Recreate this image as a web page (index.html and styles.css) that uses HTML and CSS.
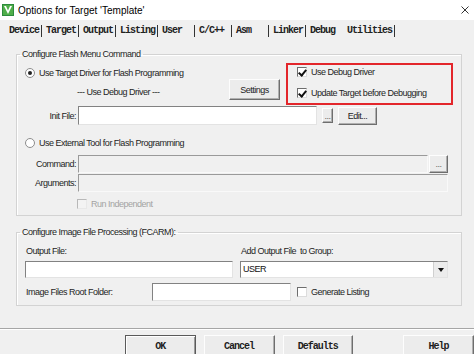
FILE: index.html
```html
<!DOCTYPE html>
<html lang="en">
<head>
    <meta charset="UTF-8" />
    <title>Options for Target 'Template'</title>
    <link rel="stylesheet" href="styles.css">
</head>

<body>
    <header class="titlebar">
        <svg class="app-icon" viewBox="0 0 12 12">
            <rect x="0" y="0" width="12" height="12" fill="#2d8b3c" />
            <rect x="1" y="1" width="10" height="10" fill="#4fae4a" />
            <path d="M2 2 L6 10 L10 2 L8 2 L6 6.5 L4 2 Z" fill="#ffffff" />
        </svg>
        <span class="title">Options for Target 'Template'</span>
        <svg class="close" viewBox="0 0 8 8">
            <path d="M0.5 0.5 L7.5 7.5 M7.5 0.5 L0.5 7.5" stroke="#333" stroke-width="1" />
        </svg>
    </header>

    <nav class="tabs">
        <span class="tab">Device</span>
        <span class="tab">Target</span>
        <span class="tab">Output</span>
        <span class="tab">Listing</span>
        <span class="tab">User</span>
        <span class="tab">C/C++</span>
        <span class="tab">Asm</span>
        <span class="tab">Linker</span>
        <span class="tab no-sep">Debug</span>
        <span class="tab active">Utilities</span>
    </nav>

    <div class="content">
        <fieldset class="group flash">
            <legend>Configure Flash Menu Command</legend>
            <div class="flash-top">
                <div class="flash-left">
                    <div class="opt first"><span class="radio on"></span>Use Target Driver for Flash Programming</div>
                    <div class="driver-row">
                        <span class="driver-note">--- Use Debug Driver ---</span>
                        <button class="btn settings">Settings</button>
                    </div>
                </div>
                <div class="highlight">
                    <div class="opt"><span class="check on"></span>Use Debug Driver</div>
                    <div class="opt"><span class="check on"></span>Update Target before Debugging</div>
                </div>
            </div>

            <div class="field-row init-row">
                <label class="lbl">Init File:</label>
                <span class="input init-input"></span>
                <button class="btn dots small">...</button>
                <button class="btn edit">Edit...</button>
            </div>

            <div class="opt ext-row"><span class="radio"></span>Use External Tool for Flash Programming</div>

            <div class="field-row cmd-row">
                <label class="lbl">Command:</label>
                <span class="input disabled grow"></span>
                <button class="btn dots">...</button>
            </div>
            <div class="field-row args-row">
                <label class="lbl">Arguments:</label>
                <span class="input disabled grow"></span>
            </div>
            <div class="opt run-row off"><span class="check"></span>Run Independent</div>
        </fieldset>

        <fieldset class="group image">
            <legend>Configure Image File Processing (FCARM):</legend>
            <div class="image-grid">
                <div class="col">
                    <span class="cap">Output File:</span>
                    <span class="input out-input"></span>
                </div>
                <div class="col">
                    <span class="cap">Add Output File&nbsp; to Group:</span>
                    <span class="input combo">USER<span class="drop"></span></span>
                </div>
            </div>
            <div class="root-row">
                <span class="root-lbl">Image Files Root Folder:</span>
                <span class="input root-input"></span>
                <div class="opt"><span class="check"></span>Generate Listing</div>
            </div>
        </fieldset>
    </div>

    <footer class="footer">
        <button class="btn big default">OK</button>
        <button class="btn big">Cancel</button>
        <button class="btn big">Defaults</button>
        <button class="btn big help">Help</button>
    </footer>
</body>

</html>
```

FILE: styles.css
```css
* {
    margin: 0;
    padding: 0;
    box-sizing: border-box;
}

body {
    width: 474px;
    height: 354px;
    overflow: hidden;
    background-color: #f0f0f0;
    color: #1e1e1e;
    font-family: "Liberation Sans", Arial, sans-serif;
    font-size: 9px;
    letter-spacing: -0.5px;
}

/* title bar */
.titlebar {
    height: 20px;
    background-color: #ffffff;
    display: flex;
    align-items: center;
    padding: 0 5px 0 2px;
}

.app-icon {
    width: 12px;
    height: 12px;
    margin-right: 4px;
}

.title {
    flex: 1;
    color: #000;
    font-size: 10px;
    letter-spacing: 0;
}

.close {
    width: 8px;
    height: 8px;
}

/* tab strip */
.tabs {
    height: 22px;
    display: flex;
    align-items: center;
    padding-left: 5px;
    font-family: "Liberation Mono", monospace;
    font-weight: bold;
    font-size: 10px;
    letter-spacing: -1px;
    color: #222;
}

.tab {
    min-width: 37px;
    height: 12px;
    line-height: 12px;
    padding: 0 2px 0 4px;
    border-right: 1px solid #333;
}

.tab.no-sep {
    border-right: none;
}

.content {
    padding: 6px 12px 0 16px;
}

/* group boxes */
.group {
    border: 1px solid #d3d3d3;
    box-shadow: inset 1px 1px #fff;
    padding: 3px 8px 4px 8px;
}

.group legend {
    margin-left: -5px;
    padding: 0 2px;
    line-height: 12px;
}

.opt {
    display: flex;
    align-items: center;
    gap: 4px;
    line-height: 12px;
    white-space: nowrap;
}

.radio {
    flex-shrink: 0;
    width: 10px;
    height: 10px;
    border-radius: 50%;
    border: 1px solid #8d8d8d;
    background-color: #fff;
    display: flex;
    align-items: center;
    justify-content: center;
}

.radio.on::after {
    content: "";
    width: 4px;
    height: 4px;
    border-radius: 50%;
    background-color: #222;
}

.check {
    flex-shrink: 0;
    position: relative;
    width: 10px;
    height: 10px;
    border: 1px solid;
    border-color: #6d6d6d #dcdcdc #dcdcdc #6d6d6d;
    background-color: #fff;
}

.check.on::after {
    content: "";
    position: absolute;
    left: 2px;
    top: 0px;
    width: 3px;
    height: 6px;
    border: solid #111;
    border-width: 0 2px 2px 0;
    transform: rotate(40deg);
}

/* flash section */
.flash-top {
    display: flex;
    gap: 6px;
}

.flash-left {
    flex: 1;
}

.opt.first {
    height: 16px;
    padding-top: 4px;
}

.driver-row {
    height: 21px;
    display: flex;
    align-items: flex-end;
}

.driver-note {
    padding-left: 52px;
    padding-bottom: 2px;
    line-height: 12px;
}

.highlight {
    width: 167px;
    height: 42px;
    border: 2px solid #e3262b;
    padding: 0 0 0 9px;
    display: flex;
    flex-direction: column;
    gap: 7px;
}

.highlight .opt {
    height: 14px;
}

.field-row {
    display: flex;
    align-items: center;
    padding-right: 5px;
}

.lbl {
    width: 51px;
    margin-right: 2px;
    text-align: right;
    white-space: nowrap;
}

.input {
    display: block;
    height: 100%;
    background-color: #fff;
    border: 1px solid;
    border-color: #828282 #e3e3e3 #e3e3e3 #828282;
}

.input.disabled {
    background-color: #f0f0f0;
    border-color: #9a9a9a #f9f9f9 #f9f9f9 #9a9a9a;
}

.grow {
    flex: 1;
}

.init-row {
    margin-top: 1px;
    height: 19px;
}

.init-input {
    width: 239px;
}

.ext-row {
    margin-top: 11px;
    height: 14px;
}

.cmd-row {
    margin-top: 5px;
    height: 18px;
}

.args-row {
    margin-top: 1px;
    height: 18px;
}

.run-row {
    margin-top: 5px;
    height: 14px;
    padding-left: 52px;
}

.off {
    color: #a3a3a3;
}

.off .check {
    border-color: #b8b8b8 #e8e8e8 #e8e8e8 #b8b8b8;
    background-color: #f3f3f3;
}

/* buttons */
.btn {
    font-family: inherit;
    font-size: 9px;
    letter-spacing: -0.5px;
    color: #1e1e1e;
    background-color: #ececec;
    border: 1px solid;
    border-color: #fdfdfd #6e6e6e #6e6e6e #fdfdfd;
    box-shadow: inset -1px -1px #b0b0b0;
}

.settings {
    width: 51px;
    height: 21px;
    margin-left: auto;
}

.dots {
    width: 19px;
    height: 18px;
    margin-left: 1px;
    line-height: 8px;
    color: #666;
}

.dots.small {
    width: 11px;
    height: 15px;
    margin-left: 5px;
}

.edit {
    width: 39px;
    height: 18px;
    margin-left: 5px;
}

/* image section */
.image {
    margin-top: 10px;
}

.image-grid {
    display: grid;
    grid-template-columns: 1fr 1fr;
    column-gap: 7px;
    padding: 4px 5px 0 0;
}

.col {
    display: flex;
    flex-direction: column;
}

.cap {
    line-height: 12px;
    padding-left: 1px;
    margin-bottom: 4px;
}

.col .input {
    height: 17px;
}

.combo {
    position: relative;
    padding-left: 2px;
    line-height: 15px;
    color: #111;
}

.drop {
    position: absolute;
    right: 0;
    top: 0;
    width: 14px;
    height: 15px;
    background-color: #ececec;
    border-left: 1px solid #d0d0d0;
}

.drop::after {
    content: "";
    position: absolute;
    left: 4px;
    top: 6px;
    border: 3px solid transparent;
    border-top: 4px solid #111;
}

.root-row {
    display: flex;
    align-items: center;
    height: 18px;
    margin-top: 5px;
}

.root-lbl {
    width: 127px;
    padding-left: 1px;
    white-space: nowrap;
}

.root-input {
    width: 139px;
    margin-right: 6px;
}

/* bottom buttons */
.footer {
    margin-top: 22px;
    border-top: 1px solid #a6a6a6;
    box-shadow: inset 0 1px #fff;
    display: flex;
    gap: 8px;
    padding: 6px 0 0 125px;
}

.btn.big {
    width: 71px;
    height: 23px;
    font-family: "Liberation Mono", monospace;
    font-size: 10px;
    font-weight: bold;
    letter-spacing: -1px;
}

.btn.default {
    border-color: #5a5a5a;
    box-shadow: inset 1px 1px #fff, inset -1px -1px #9a9a9a;
}

.help {
    margin-left: 42px;
}
```
